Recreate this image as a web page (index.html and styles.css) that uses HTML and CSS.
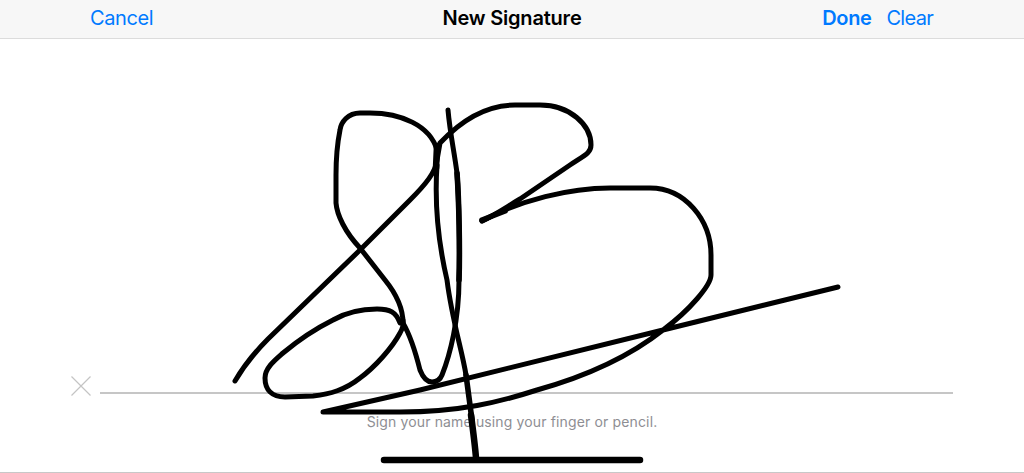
FILE: index.html
```html
<!DOCTYPE html>
<html lang="en">
<head>
<meta charset="utf-8">
<title>New Signature</title>
<link rel="stylesheet" href="styles.css">
</head>
<body>
<div class="sheet">
  <header class="bar">
    <span class="action cancel">Cancel</span>
    <h1 class="title">New Signature</h1>
    <div class="actions">
      <span class="action done">Done</span>
      <span class="action clear">Clear</span>
    </div>
  </header>
  <main class="pad">
    <div class="sign-row">
      <svg class="cross" width="20" height="20" viewBox="0 0 20 20" aria-hidden="true"><path d="M0.5 0.5L19.5 19.5M19.5 0.5L0.5 19.5"/></svg>
      <div class="sign-line"></div>
    </div>
    <p class="hint">Sign your name using your finger or pencil.</p>
    <svg class="ink" width="1024" height="433" viewBox="0 39 1024 433" aria-hidden="true">
      <path d="M235 381C245 364 255 352 268 339L360 250L410 200C425 185 436 172 437 160L440 143C455 127 480 105 515 105L540 105C570 105 591 125 591 145C591 153 585 155 570 165L520 199C505 208 495 215 482 221"/>
      <path d="M482 221C520 200 570 188 610 188L650 188C685 188 711 220 711 255L711 275C711 285 690 310 663 330C625 360 580 378 537 390C500 402 460 412 400 412L323 412L420 390L663 330L838 287"/>
      <path d="M437 150C430 125 400 113 370 113L360 113C348 113 341 122 340 130C337 145 336 160 336 175L336 203C337 215 345 232 360 248L385 280C398 296 403 310 403 323C410 335 415 350 420 370C424 380 428 382 432 382C437 382 440 380 442 375C450 355 459 320 459 280C460 250 459 200 457 173C454 150 450 133 448 110"/>
      <path d="M400 323C396 312 390 309 377 309C360 309 345 313 333 320C315 329 295 343 283 353C275 360 265 368 265 378C265 390 272 397 285 397L313 396C330 394 345 390 360 378C375 367 392 348 400 333C403 328 404 325 403 320"/>
      <path d="M437 165C434 210 440 250 447 280C452 320 462 350 466 375"/>
      <path class="heavy" d="M437 146L436 168"/>
      <path class="medium" d="M482 220L505 211"/>
      <path class="medium" d="M457 173C459 200 460 250 459 280"/>
      <path class="medium" d="M466 375C468 390 470 405 472 420"/>
      <path class="heavy" d="M471 415C473 430 475 445 476 458"/>
      <path class="heavy" d="M384 460L640 460"/>
    </svg>
  </main>
</div>
</body>
</html>
```

FILE: styles.css
```css
* { box-sizing: border-box; }
html, body { margin: 0; padding: 0; background: #fff; }
body { width: 1024px; height: 473px; overflow: hidden; font-family: Inter, "Liberation Sans", sans-serif; }
.sheet { display: flex; flex-direction: column; height: 473px; }
.bar {
  display: flex;
  align-items: center;
  justify-content: space-between;
  height: 39px;
  padding: 0 91px 2px 90px;
  background: #f7f7f7;
  border-bottom: 1px solid #dcdcdc;
  position: relative;
}
.action { font-size: 20px; color: #007aff; letter-spacing: -0.4px; }
.clear { letter-spacing: -0.7px; }
.actions { display: flex; gap: 15px; }
.done { font-weight: 600; }
.title {
  position: absolute;
  left: 0; right: 0; top: 0;
  margin: 0;
  line-height: 37px;
  text-align: center;
  font-size: 20px;
  font-weight: 600;
  color: #000;
  letter-spacing: -0.2px;
}
.pad {
  position: relative;
  flex: 1;
  padding: 337px 71px 0;
  border-bottom: 1px solid #c8c8c8;
}
.sign-row { display: flex; align-items: flex-end; gap: 9px; }
.cross { display: block; flex: none; }
.cross path { fill: none; stroke: #c4c4c4; stroke-width: 1.2; }
.sign-line { flex: 1; height: 2px; background: #c6c6c6; margin: 0 0 2px; }
.hint {
  margin: 17px 0 0;
  text-align: center;
  font-size: 14px;
  color: #8e8e93;
  line-height: 18px;
  letter-spacing: 0.14px;
}
.ink { position: absolute; left: 0; top: 0; pointer-events: none; }
.ink path { fill: none; stroke: #000; stroke-width: 5; stroke-linecap: round; stroke-linejoin: round; }
.ink path.medium { stroke-width: 5.6; }
.ink path.heavy { stroke-width: 6.5; }
```
